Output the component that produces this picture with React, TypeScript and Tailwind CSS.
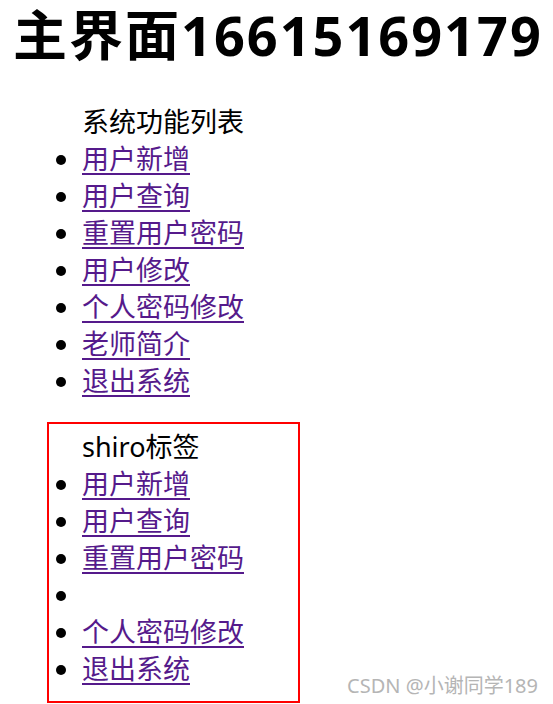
const font = "font-['Noto_Sans','Noto_Sans_CJK_SC',sans-serif]";

const menu = ["用户新增", "用户查询", "重置用户密码", "用户修改", "个人密码修改", "老师简介", "退出系统"];
const shiro = ["用户新增", "用户查询", "重置用户密码", "", "个人密码修改", "退出系统"];

function LinkList({ title, items, inset }: { title: string; items: string[]; inset?: boolean }) {
  return (
    <ul className={`list-disc ${inset ? "pl-[33px]" : "pl-[35px]"} text-[27px] leading-[37px] text-black`}>
      <span className="block">{title}</span>
      {items.map((item, i) => (
        <li key={i}>
          {item && (
            <a href="#" className="text-[#551a8b] underline underline-offset-[4px] decoration-[2px]">
              {item}
            </a>
          )}
        </li>
      ))}
    </ul>
  );
}

export default function App() {
  return (
    <div className={`relative h-[704px] w-[553px] overflow-hidden bg-white ${font}`}>
      <h1 className="pl-[13px] pt-[3px] text-[54px] leading-[64px] font-bold tracking-[2px] whitespace-nowrap">
        主界面16615169179
      </h1>
      <div className="pl-[47px] pt-[36px]">
        <LinkList title="系统功能列表" items={menu} />
        <div className="mt-[23px] w-[253px] h-[281px] border-2 border-[#ff0000] pt-[4px]">
          <LinkList title="shiro标签" items={shiro} inset />
        </div>
      </div>
      <div className="absolute right-[15px] bottom-[5px] text-[20px] leading-[26px] text-[#b5b5b5] [text-shadow:0_0_1px_#fff]">
        CSDN @小谢同学189
      </div>
    </div>
  );
}
